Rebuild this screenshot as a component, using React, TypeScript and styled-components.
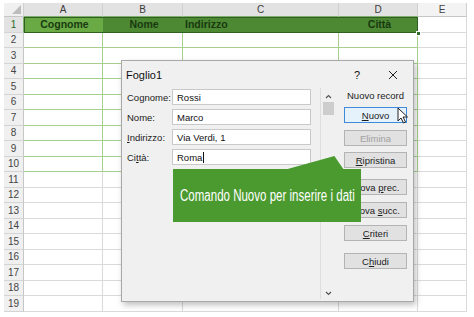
import React from "react";
import styled, { createGlobalStyle, css } from "styled-components";

const GlobalStyle = createGlobalStyle`
  body {
    margin: 0;
    background: #fff;
    font-family: "Liberation Sans", Arial, sans-serif;
  }
`;

const Page = styled.div`
  position: relative;
  width: 474px;
  height: 317px;
  overflow: hidden;
  padding: 3px 0 0 4px;
  box-sizing: border-box;
`;

const Sheet = styled.div`
  display: grid;
  grid-template-columns: 20px 79px 80px 156px 79px 49px;
  grid-template-rows: 14px repeat(19, 15.5px);
  font-size: 10px;
  color: #444;
`;

const Corner = styled.div`
  background: #f0f0f0;
  border-right: 1px solid #d0d0d0;
  border-bottom: 1px solid #c6c6c6;
  position: relative;
  &::after {
    content: "";
    position: absolute;
    right: 2px;
    bottom: 2px;
    border-left: 9px solid transparent;
    border-bottom: 9px solid #bdbdbd;
  }
`;

const ColHeader = styled.div<{ $sel?: boolean }>`
  display: flex;
  align-items: center;
  justify-content: center;
  border-right: 1px solid #d0d0d0;
  background: ${(p) => (p.$sel ? "#e2e2e2" : "#f3f3f3")};
  border-bottom: 1px solid ${(p) => (p.$sel ? "#7fb06a" : "#c6c6c6")};
  color: ${(p) => (p.$sel ? "#3b3b3b" : "#444")};
`;

const RowHeader = styled.div<{ $sel?: boolean }>`
  display: flex;
  align-items: center;
  justify-content: center;
  background: ${(p) => (p.$sel ? "#e2e2e2" : "#f0f0f0")};
  border-bottom: 1px solid #d4d4d4;
  border-right: 1px solid ${(p) => (p.$sel ? "#7fb06a" : "#c6c6c6")};
  color: ${(p) => (p.$sel ? "#2f6b2a" : "#444")};
  font-size: 10px;
`;

const Cell = styled.div<{ $table?: boolean }>`
  ${(p) =>
    p.$table
      ? css`
          border-right: 1px solid #a6d08c;
          border-bottom: 1px solid #a6d08c;
        `
      : css`
          border-right: 1px solid #dadada;
          border-bottom: 1px solid #dadada;
        `}
`;

const HeaderBand = styled.div`
  grid-column: 2 / 6;
  display: grid;
  grid-template-columns: 79px 80px 156px 79px;
  outline: 1.5px solid #2f5f22;
  outline-offset: -1px;
  position: relative;
  &::after {
    content: "";
    position: absolute;
    right: -3px;
    bottom: -3px;
    width: 5px;
    height: 5px;
    background: #2f6b2a;
    border: 1px solid #fff;
    box-sizing: border-box;
  }
`;

const HeadCell = styled.div<{ $active?: boolean; $align?: string }>`
  display: flex;
  align-items: center;
  justify-content: ${(p) => p.$align || "center"};
  padding-left: 2px;
  background: ${(p) => (p.$active ? "#6aaa45" : "#4d8833")};
  color: #183a10;
  font-weight: bold;
  font-size: 10.5px;
  border-bottom: 1px solid #3f7a2c;
`;

const Dialog = styled.div`
  position: absolute;
  left: 121px;
  top: 60px;
  width: 293px;
  height: 242px;
  box-sizing: border-box;
  background: #f0f0f0;
  border: 1px solid #a8a8a8;
  box-shadow: 2px 3px 6px rgba(0, 0, 0, 0.25);
  display: flex;
  flex-direction: column;
  font-size: 9.5px;
  color: #222;
`;

const TitleBar = styled.div`
  height: 28px;
  display: flex;
  align-items: center;
  padding: 0 10px 0 4px;
  font-size: 11px;
  color: #111;
`;

const Title = styled.div`
  flex: 1;
`;

const TitleIcon = styled.div`
  width: 20px;
  display: flex;
  justify-content: center;
  font-size: 11px;
  margin-left: 16px;
`;

const Body = styled.div`
  flex: 1;
  display: flex;
  min-height: 0;
`;

const Fields = styled.div`
  width: 184px;
  margin-left: 5px;
  display: flex;
  flex-direction: column;
  gap: 4px;
`;

const FieldRow = styled.div`
  display: flex;
  align-items: center;
`;

const Label = styled.div`
  width: 45px;
  flex: none;
`;

const Input = styled.div`
  width: 139px;
  height: 16px;
  box-sizing: border-box;
  background: #fff;
  border: 1px solid #c9c9c9;
  padding-left: 4px;
  display: flex;
  align-items: center;
  color: #111;
`;

const Caret = styled.span`
  display: inline-block;
  width: 1px;
  height: 11px;
  background: #111;
  margin-left: 1px;
`;

const ScrollBar = styled.div`
  width: 14px;
  margin-left: 9px;
  margin-top: -1px;
  margin-bottom: 2px;
  border-left: 1px solid #dedede;
  display: flex;
  flex-direction: column;
  align-items: center;
`;

const Arrow = styled.div`
  height: 12px;
  display: flex;
  align-items: center;
  justify-content: center;
  margin-top: 2px;
`;

const Thumb = styled.div`
  width: 11px;
  height: 13px;
  background: #cdcdcd;
`;

const Spacer = styled.div`
  flex: 1;
`;

const Buttons = styled.div`
  width: 63px;
  margin-left: 9px;
  display: flex;
  flex-direction: column;
`;

const RecordLabel = styled.div`
  height: 12px;
  margin-top: 1px;
  text-align: center;
  font-size: 9.5px;
`;

const Button = styled.div<{ $gap: number; $primary?: boolean; $disabled?: boolean }>`
  margin-top: ${(p) => p.$gap}px;
  height: 16px;
  box-sizing: border-box;
  display: flex;
  align-items: center;
  justify-content: center;
  background: ${(p) => (p.$primary ? "#e5f1fb" : "#e1e1e1")};
  border: 1px solid ${(p) => (p.$primary ? "#3c8ad8" : "#b4b4b4")};
  color: ${(p) => (p.$disabled ? "#a0a0a0" : "#1c1c1c")};
  font-size: 9.5px;
`;

const Callout = styled.div`
  position: absolute;
  left: 173px;
  top: 169px;
  width: 188px;
  height: 53px;
  background: #4b9a2f;
  display: flex;
  align-items: center;
  justify-content: center;
  color: #fff;
  font-family: "Liberation Sans", Arial, sans-serif;
  font-size: 16px;
  white-space: nowrap;
  &::before {
    content: "";
    position: absolute;
    left: 111px;
    top: -13px;
    width: 60px;
    height: 14px;
    background: #4b9a2f;
    clip-path: polygon(0 100%, 84% 0, 100% 100%);
  }
`;

/* no condensed face is installed, so the narrow lettering is squeezed */
const CalloutText = styled.span`
  display: inline-block;
  transform: scaleX(0.72);
  margin-top: 1px;
`;

const Cursor = styled.svg`
  position: absolute;
  left: 397px;
  top: 107px;
`;

const cols = ["A", "B", "C", "D", "E"];

const tableCell = (row: number, col: number) => row >= 2 && row <= 10 && col < 4;

export default function App() {
  const rows: React.ReactNode[] = [];
  for (let r = 2; r <= 19; r++) {
    rows.push(<RowHeader key={"h" + r}>{r}</RowHeader>);
    for (let c = 0; c < 5; c++) {
      rows.push(<Cell key={r + "-" + c} $table={tableCell(r, c)} />);
    }
  }

  return (
    <Page>
      <GlobalStyle />
      <Sheet>
        <Corner />
        {cols.map((c, i) => (
          <ColHeader key={c} $sel={i < 4}>
            {c}
          </ColHeader>
        ))}
        <RowHeader $sel>1</RowHeader>
        <HeaderBand>
          <HeadCell $active>Cognome</HeadCell>
          <HeadCell>Nome</HeadCell>
          <HeadCell $align="flex-start">Indirizzo</HeadCell>
          <HeadCell>Città</HeadCell>
        </HeaderBand>
        <Cell />
        {rows}
      </Sheet>

      <Dialog>
        <TitleBar>
          <Title>Foglio1</Title>
          <TitleIcon>?</TitleIcon>
          <TitleIcon>
            <svg width="10" height="10" viewBox="0 0 10 10">
              <path d="M1 1 L9 9 M9 1 L1 9" stroke="#222" strokeWidth="1" />
            </svg>
          </TitleIcon>
        </TitleBar>
        <Body>
          <Fields>
            <FieldRow>
              <Label>
                Co<u>g</u>nome:
              </Label>
              <Input>Rossi</Input>
            </FieldRow>
            <FieldRow>
              <Label>Nome:</Label>
              <Input>Marco</Input>
            </FieldRow>
            <FieldRow>
              <Label>
                <u>I</u>ndirizzo:
              </Label>
              <Input>Via Verdi, 1</Input>
            </FieldRow>
            <FieldRow>
              <Label>
                Ci<u>t</u>tà:
              </Label>
              <Input>
                Roma
                <Caret />
              </Input>
            </FieldRow>
          </Fields>
          <ScrollBar>
            <Arrow>
              <svg width="7" height="5" viewBox="0 0 7 5">
                <path d="M1 4 L3.5 1.5 L6 4" stroke="#555" strokeWidth="1.2" fill="none" />
              </svg>
            </Arrow>
            <Thumb />
            <Spacer />
            <Arrow>
              <svg width="7" height="5" viewBox="0 0 7 5">
                <path d="M1 1 L3.5 3.5 L6 1" stroke="#555" strokeWidth="1.2" fill="none" />
              </svg>
            </Arrow>
          </ScrollBar>
          <Buttons>
            <RecordLabel>Nuovo record</RecordLabel>
            <Button $gap={5} $primary>
              <span>
                <u>N</u>uovo
              </span>
            </Button>
            <Button $gap={7} $disabled>
              Elimina
            </Button>
            <Button $gap={6}>
              <span>
                <u>R</u>ipristina
              </span>
            </Button>
            <Button $gap={11}>
              <span>
                Trova <u>p</u>rec.
              </span>
            </Button>
            <Button $gap={7}>
              <span>
                Trova <u>s</u>ucc.
              </span>
            </Button>
            <Button $gap={7}>
              <span>
                <u>C</u>riteri
              </span>
            </Button>
            <Button $gap={12}>
              <span>
                C<u>h</u>iudi
              </span>
            </Button>
          </Buttons>
        </Body>
      </Dialog>

      <Callout>
        <CalloutText>Comando Nuovo per inserire i dati</CalloutText>
      </Callout>

      <Cursor width="12" height="17" viewBox="0 0 12 17">
        <path
          d="M1 1 L1 14 L4 11 L6.5 16 L8.5 15 L6 10 L10.5 10 Z"
          fill="#fff"
          stroke="#222"
          strokeWidth="1"
          strokeLinejoin="round"
        />
      </Cursor>
    </Page>
  );
}
